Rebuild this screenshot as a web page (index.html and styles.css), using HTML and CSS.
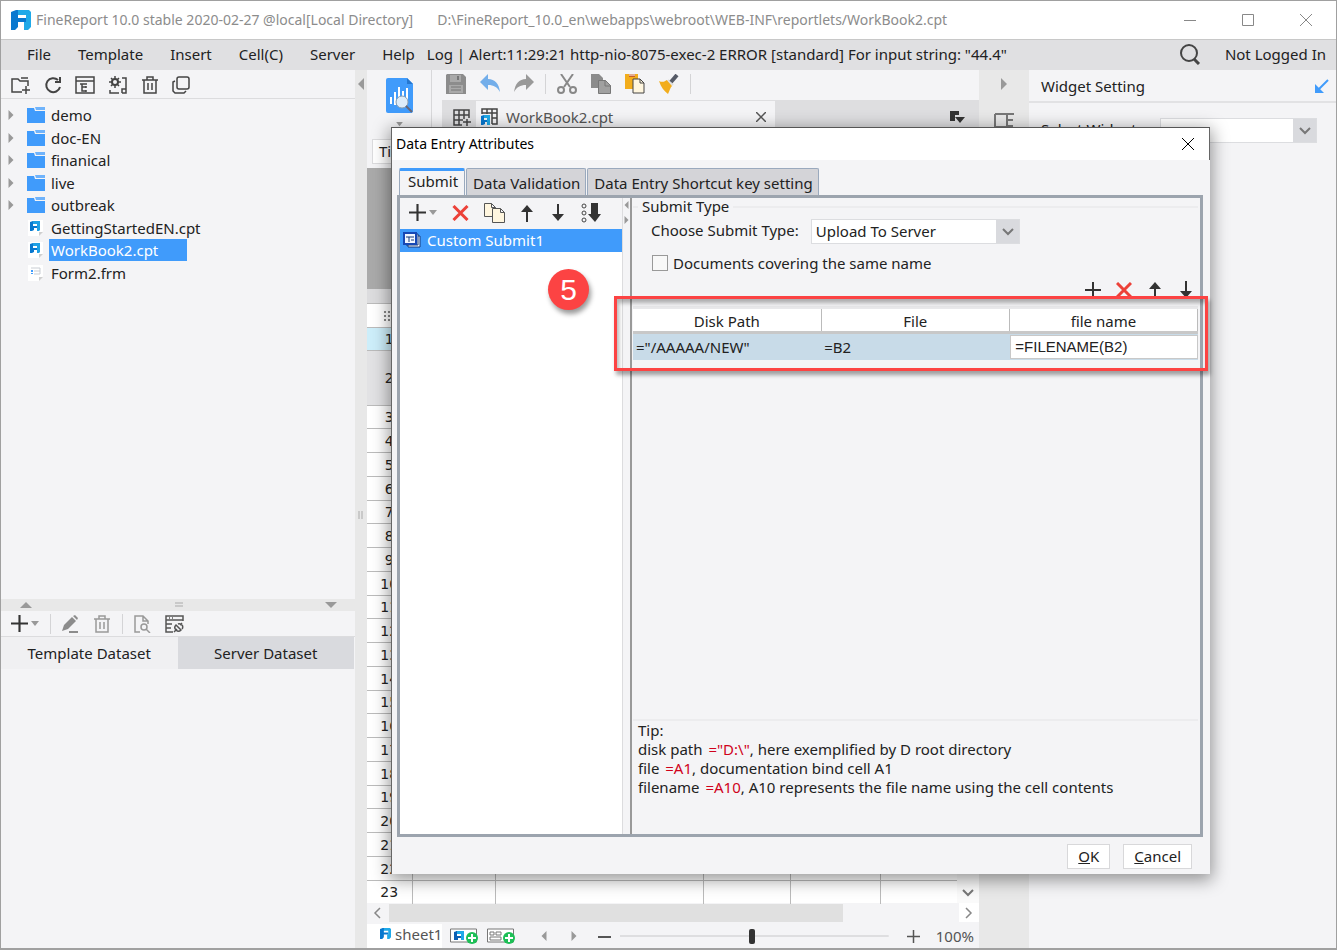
FILE: index.html
```
<!doctype html>
<html lang="en">

<head>
    <meta charset="utf-8" />
    <title>FineReport 10.0</title>
    <link rel="icon" href="data:,">
    <meta name="viewport" content="width=device-width, initial-scale=1">
    <link rel="stylesheet" href="styles.css">
</head>

<body>
    <svg class="sprite" aria-hidden="true">
        <symbol id="logo" viewBox="0 0 20 20">
            <path d="M5 0h13l2 2v15l-3 3h-4v-8h2V5H5z" fill="#1fa9e8" />
            <path d="M0 2l5-2h2v8h8v4H7v5l-3 3H0z" fill="#0878cf" />
        </symbol>
        <symbol id="folder" viewBox="0 0 18 16">
            <path d="M0 1h7l1 3h10v12H0z" fill="#409bfb" />
            <path d="M8 0h10v3H9z" fill="#6fb3fb" />
        </symbol>
        <symbol id="cpt" viewBox="0 0 16 16">
            <path d="M0 0h15v11l-4 5H0z" fill="#fff" />
            <path d="M11 16v-4h4z" fill="#cfcfcf" />
            <path d="M5 1h7v9l-1 1H9V4H5z" fill="#1fa0e4" />
            <path d="M2 2l3-1v5h4v2H6v2l-2 1H2z" fill="#0878cf" />
        </symbol>
        <symbol id="frm" viewBox="0 0 16 16">
            <path d="M0 0h15v11l-4 5H0z" fill="#fff" />
            <path d="M11 16v-4h4z" fill="#cfcfcf" />
            <path d="M3 3h9M6 6h6M6 9h6M12 3v6" stroke="#c9cdd3" fill="none" />
            <path d="M3 5h2v2H3zM3 8h2v1H3z" fill="#409bfb" />
        </symbol>
        <symbol id="plus" viewBox="0 0 16 16">
            <path d="M8 0v16M0 8h16" stroke="#333" stroke-width="2" />
        </symbol>
        <symbol id="cross" viewBox="0 0 16 16">
            <path d="M1 1l14 14M15 1L1 15" stroke="#ec4138" stroke-width="3" />
        </symbol>
        <symbol id="up" viewBox="0 0 16 18">
            <path d="M8 18V6" stroke="#333" stroke-width="2" />
            <path d="M2 8l6-7 6 7z" fill="#333" />
        </symbol>
        <symbol id="down" viewBox="0 0 16 18">
            <path d="M8 0v12" stroke="#333" stroke-width="2" />
            <path d="M2 10l6 7 6-7z" fill="#333" />
        </symbol>
        <symbol id="caret" viewBox="0 0 8 6">
            <path d="M0 0h8L4 5z" fill="#999" />
        </symbol>
        <symbol id="trash" viewBox="0 0 18 18">
            <path d="M1 4h16M6 4V1h6v3M3 4v13h12V4M7 7v7M11 7v7" fill="none" stroke="currentColor"
                stroke-width="1.5" />
        </symbol>
        <symbol id="chevron" viewBox="0 0 12 8">
            <path d="M1 1l5 5 5-5" fill="none" stroke="#777" stroke-width="2" />
        </symbol>
        <symbol id="left" viewBox="0 0 6 12">
            <path d="M6 0v12L0 6z" fill="#999" />
        </symbol>
        <symbol id="right" viewBox="0 0 6 12">
            <path d="M0 0v12l6-6z" fill="#999" />
        </symbol>
    </svg>

    <header class="titlebar">
        <svg class="logo"><use href="#logo" /></svg>
        <span class="title">FineReport 10.0 stable 2020-02-27 @local[Local Directory]</span>
        <span class="path">D:\FineReport_10.0_en\webapps\webroot\WEB-INF\reportlets/WorkBook2.cpt</span>
        <div class="winbuttons">
            <button aria-label="Minimize"><svg width="12" height="12"><path d="M0 6.500h12" /></svg></button>
            <button aria-label="Maximize"><svg width="12" height="12"><path d="M.5.5h11v11H.5z" /></svg></button>
            <button aria-label="Close"><svg width="12" height="12"><path d="M0 0l12 12M12 0L0 12" /></svg></button>
        </div>
    </header>

    <nav class="menubar">
        <button class="menu">File</button>
        <button class="menu">Template</button>
        <button class="menu">Insert</button>
        <button class="menu">Cell(C)</button>
        <button class="menu">Server</button>
        <button class="help">Help</button>
        <span class="log">Log | Alert:11:29:21 http-nio-8075-exec-2 ERROR [standard] For input string: "44.4"</span>
        <button class="search" aria-label="Search">
            <svg width="22" height="22" fill="none" stroke="#444">
                <circle cx="10" cy="10" r="8" stroke-width="2" />
                <path d="M15 16l5 5" stroke-width="3" />
            </svg>
        </button>
        <button>Not Logged In</button>
    </nav>

    <main class="workspace">
        <aside class="sidebar">
            <div class="files">
                <div class="toolbar">
                    <button aria-label="New folder"><svg width="20" height="18" fill="none" stroke="#444"
                            stroke-width="1.500"><path d="M11 16H1V3h6l2 2h8v5M10 2h7M15 10v8M11 14h8" /></svg></button>
                    <button aria-label="Refresh"><svg width="18" height="18" fill="none" stroke="#444"
                            stroke-width="2"><path d="M14 4a7 7 0 1 0 2 7M16 1v5h-5" /></svg></button>
                    <button aria-label="Locate"><svg width="20" height="18" fill="none" stroke="#444"
                            stroke-width="1.500"><path d="M1 1h18v16H1zM1 5h18M5 8h5M7 8v7h4M7 11h4" /><path
                                d="M10 8h2M10 11h2M10 15h2" /></svg></button>
                    <button aria-label="Settings"><svg width="20" height="18" fill="none" stroke="#444"
                            stroke-width="1.500"><circle cx="7" cy="6" r="3" stroke-width="2" /><path
                                d="M7 0v3M7 9v3M1 6h3M10 6h3M3 2l2 2M9 8l2 2M11 2L9 4M5 8l-2 2M14 2h4v15h-4M2 14v3h9M14 17v-4h4" /></svg></button>
                    <button aria-label="Delete"><svg width="18" height="18"><use href="#trash" /></svg></button>
                    <button aria-label="Copy"><svg width="18" height="18" fill="none" stroke="#444"
                            stroke-width="1.500"><rect x="5" y="1" width="12" height="12" rx="2" /><path
                                d="M3 5L1 6v9l2 2h9l2-2" /></svg></button>
                </div>
                <ul class="tree">
                    <li><svg class="twist"><use href="#right" /></svg><svg class="node"><use href="#folder" /></svg><span>demo</span></li>
                    <li><svg class="twist"><use href="#right" /></svg><svg class="node"><use href="#folder" /></svg><span>doc-EN</span></li>
                    <li><svg class="twist"><use href="#right" /></svg><svg class="node"><use href="#folder" /></svg><span>finanical</span></li>
                    <li><svg class="twist"><use href="#right" /></svg><svg class="node"><use href="#folder" /></svg><span>live</span></li>
                    <li><svg class="twist"><use href="#right" /></svg><svg class="node"><use href="#folder" /></svg><span>outbreak</span></li>
                    <li><svg class="twist"></svg><svg class="node"><use href="#cpt" /></svg><span>GettingStartedEN.cpt</span></li>
                    <li><svg class="twist"></svg><svg class="node"><use href="#cpt" /></svg><span class="current">WorkBook2.cpt</span></li>
                    <li><svg class="twist"></svg><svg class="node"><use href="#frm" /></svg><span>Form2.frm</span></li>
                </ul>
            </div>
            <div class="hsplit">
                <svg width="12" height="6"><path d="M0 6h12L6 0z" fill="#999" /></svg>
                <svg width="8" height="6"><path d="M0 1h8M0 4h8" stroke="#aaa" /></svg>
                <svg width="12" height="6"><path d="M0 0h12L6 6z" fill="#999" /></svg>
            </div>
            <div class="datasets">
                <div class="toolbar small">
                    <button class="add" aria-label="Add dataset"><svg width="17" height="17"><use href="#plus" /></svg><svg
                            width="8" height="6"><use href="#caret" /></svg></button>
                    <i class="sep"></i>
                    <button aria-label="Edit"><svg width="18" height="18" fill="#8c8c8c"><path
                                d="M1 16l2-6 8-8 4 4-8 8zM12 1l2-1 3 3-1 2zM8 16h9v2H8z" /></svg></button>
                    <button class="dim" aria-label="Delete dataset"><svg width="18" height="18"><use href="#trash" /></svg></button>
                    <i class="sep"></i>
                    <button aria-label="Preview dataset"><svg width="18" height="18" fill="none" stroke="#999"
                            stroke-width="1.500"><path d="M7 17H2V1h8l5 5v3M10 1v5h5" /><circle cx="11" cy="12" r="3" /><path
                                d="M13 14l4 4" /></svg></button>
                    <button aria-label="Connection"><svg width="19" height="18" fill="none" stroke="#555"
                            stroke-width="1.500"><path d="M8 17H1V1h17v5M1 5h17M1 9h6M1 13h5M4 3h1M7 3h1" /><path
                                d="M9 17l3-3M17 8l-2 2M11 10l5 5c-2 2-4 1-5 0s-2-3 0-5zM13 9c2-1 3 0 4 1s1 3 0 4" /></svg></button>
                </div>
                <div class="dstabs">
                    <button>Template Dataset</button>
                    <button class="other">Server Dataset</button>
                </div>
            </div>
        </aside>

        <div class="vsplit">
            <svg width="6" height="12"><use href="#left" /></svg>
            <svg class="grip" width="6" height="8"><path d="M1 0v8M4 0v8" stroke="#aaa" /></svg>
        </div>

        <section class="designer">
            <div class="top">
                <button class="preview" aria-label="Preview">
                    <svg width="27" height="36">
                        <path d="M2 0h19l6 6v27q0 2-2 2H2q-2 0-2-2V2q0-2 2-2z" fill="#409bfb" />
                        <path d="M21 0l6 6h-6z" fill="#2577cf" />
                        <path d="M5 26v-7M9 27V14M13 22V9M17 20v-7M21 26V10" stroke="#fff" stroke-width="2" />
                        <circle cx="16" cy="24" r="6" fill="#dcecfa" stroke="#8b9dad" />
                        <path d="M20 28l6 6" stroke="#667" stroke-width="2" />
                    </svg>
                    <svg width="7" height="5"><use href="#caret" /></svg>
                </button>
                <div class="topright">
                    <div class="toolbar edit">
                        <button aria-label="Save"><svg width="20" height="20"><path
                                    d="M1 0h16l3 3v17H0V1z" fill="#8c8c8c" /><path
                                    d="M4 1h11v7H4zM3 11h14v8H3z" fill="#a9a9a9" /><path d="M11 2h2v4h-2z" fill="#777" /><path
                                    d="M5 13h10M5 16h10" stroke="#777" /></svg></button>
                        <button aria-label="Undo"><svg width="20" height="20"><path
                                    d="M0 8l8-8v5c7 0 11 5 12 13-3-5-6-7-12-7v5z" fill="#73aeea" /></svg></button>
                        <button aria-label="Redo"><svg width="20" height="20"><path
                                    d="M20 8l-8-8v5C5 5 1 10 0 18c3-5 6-7 12-7v5z" fill="#999" /></svg></button>
                        <i class="sep"></i>
                        <button aria-label="Cut"><svg width="20" height="20" fill="none" stroke="#888"
                                stroke-width="2"><path d="M4 0l9 13M16 0L7 13" /><circle cx="4" cy="16" r="3" /><circle
                                    cx="16" cy="16" r="3" /></svg></button>
                        <button aria-label="Copy cells"><svg width="20" height="20"><path d="M0 0h8l4 4v10H0z"
                                    fill="#8c8c8c" /><path d="M7.500 6.500h7l5 5v8h-12z" fill="#a0a0a0" stroke="#777" /><path
                                    d="M14 6v6h6" fill="none" stroke="#777" /></svg></button>
                        <button aria-label="Paste"><svg width="20" height="20"><path d="M0 0h13v15H0z"
                                    fill="#f2ad1c" /><path d="M4 0h6v3H4z" fill="#c85d27" /><path d="M4 1h6" stroke="#fff" /><path
                                    d="M8 5h7l4 4v10H8z" fill="#fff6df" stroke="#444" /><path d="M15 5v4h4" fill="none"
                                    stroke="#444" /></svg></button>
                        <button aria-label="Format brush"><svg width="20" height="20"><path
                                    d="M0 7c4 2 6 0 8-1l5 6c-2 2-2 4-4 8C5 17 2 13 0 7z" fill="#f2ad1c" /><path
                                    d="M9 6l5 5" stroke="#ddd" stroke-width="2" /><path d="M12 8l6-7" stroke="#555a66"
                                    stroke-width="4" /></svg></button>
                        <i class="sep"></i>
                    </div>
                    <div class="booktabs">
                        <button class="newbook" aria-label="New workbook"><svg width="18" height="17" fill="none"
                                stroke="#444" stroke-width="1.500"><path
                                    d="M9 16H1V1h15v8M1 6h15M1 11h9M6 1v15M11 1v9M14 10v7M10 13h8" /></svg></button>
                        <div class="book">
                            <svg width="17" height="17" fill="none" stroke="#444" stroke-width="1.500"><path
                                    d="M1 6V1h15v15h-5M1 5h15M6 1v5M11 1v15M11 10h5" /><path
                                    d="M3 7h6v10H6v-7H3z" fill="#1fa9e8" stroke="none" /><path
                                    d="M0 8l3-1v5h3v2H4v2l-2 1H0z" fill="#0878cf" stroke="none" /></svg>
                            <span>WorkBook2.cpt</span>
                            <button aria-label="Close tab"><svg width="10" height="10"><path d="M0 0l10 10M10 0L0 10"
                                        stroke="#555" stroke-width="1.500" /></svg></button>
                        </div>
                        <svg class="booklist" width="16" height="14"><path d="M0 0h9v4H5v6H0zM5 6h10l-5 6z"
                                fill="#333" /></svg>
                    </div>
                </div>
            </div>
            <div class="paramrow"><span class="cellbox">Ti</span></div>
            <div class="param"></div>
            <div class="gap"></div>
            <div class="sheetarea">
                <table class="sheet">
                    <colgroup>
                        <col class="c-num"><col class="c-a"><col class="c-b"><col class="c-c"><col class="c-d"><col>
                    </colgroup>
                    <tr class="head"><th><svg width="12" height="12"><path d="M1 2h11M1 6h11M1 10h11" stroke="#888"
                                    stroke-width="2" stroke-dasharray="2" /></svg></th><td></td><td></td><td></td><td></td><td></td></tr>
                    <tr class="first"><th>1</th><td></td><td></td><td></td><td></td><td></td></tr>
                    <tr class="second"><th>2</th><td></td><td></td><td></td><td></td><td></td></tr>
                    <tr><th>3</th><td></td><td></td><td></td><td></td><td></td></tr>
                    <tr><th>4</th><td></td><td></td><td></td><td></td><td></td></tr>
                    <tr><th>5</th><td></td><td></td><td></td><td></td><td></td></tr>
                    <tr><th>6</th><td></td><td></td><td></td><td></td><td></td></tr>
                    <tr><th>7</th><td></td><td></td><td></td><td></td><td></td></tr>
                    <tr><th>8</th><td></td><td></td><td></td><td></td><td></td></tr>
                    <tr><th>9</th><td></td><td></td><td></td><td></td><td></td></tr>
                    <tr><th>10</th><td></td><td></td><td></td><td></td><td></td></tr>
                    <tr><th>11</th><td></td><td></td><td></td><td></td><td></td></tr>
                    <tr><th>12</th><td></td><td></td><td></td><td></td><td></td></tr>
                    <tr><th>13</th><td></td><td></td><td></td><td></td><td></td></tr>
                    <tr><th>14</th><td></td><td></td><td></td><td></td><td></td></tr>
                    <tr><th>15</th><td></td><td></td><td></td><td></td><td></td></tr>
                    <tr><th>16</th><td></td><td></td><td></td><td></td><td></td></tr>
                    <tr><th>17</th><td></td><td></td><td></td><td></td><td></td></tr>
                    <tr><th>18</th><td></td><td></td><td></td><td></td><td></td></tr>
                    <tr><th>19</th><td></td><td></td><td></td><td></td><td></td></tr>
                    <tr><th>20</th><td></td><td></td><td></td><td></td><td></td></tr>
                    <tr><th>21</th><td></td><td></td><td></td><td></td><td></td></tr>
                    <tr><th>22</th><td></td><td></td><td></td><td></td><td></td></tr>
                    <tr><th>23</th><td></td><td></td><td></td><td></td><td></td></tr>
                </table>
                <div class="vscroll"><svg width="12" height="8"><use href="#chevron" /></svg></div>
            </div>
            <div class="hscroll">
                <svg width="22" height="12"><path d="M13 1L8 6l5 5" fill="none" stroke="#888" stroke-width="1.500" /></svg>
                <i class="thumb"></i>
                <svg class="end" width="20" height="19"><path d="M7 5l5 5-5 5" fill="none" stroke="#888"
                        stroke-width="1.500" /></svg>
            </div>
            <div class="status">
                <div class="sheettab"><svg width="11" height="11"><use href="#logo" /></svg>sheet1</div>
                <button aria-label="Add sheet"><svg width="29" height="17"><path d="M.5 1h26v13H.5z" fill="#fff"
                            stroke="#777" /><path d="M6 3h8v9h-3V6H6z" fill="#1fa9e8" /><path
                            d="M4 4l3-1v5h4v2H8v2H4z" fill="#0b60b4" /><circle cx="22"
                            cy="10" r="6" fill="#1dbf56" /><path d="M22 6v8M18 10h8" stroke="#fff"
                            stroke-width="2" /></svg></button>
                <button aria-label="Add form"><svg width="29" height="17"><path d="M.5 1h26v13H.5z" fill="#fff"
                            stroke="#777" /><path d="M3 4h4v3H3zM9 4h5v3H9zM3 9h11v3H3z" fill="none"
                            stroke="#777" /><circle cx="22" cy="10" r="6" fill="#1dbf56" /><path
                            d="M22 6v8M18 10h8" stroke="#fff" stroke-width="2" /></svg></button>
                <button class="prev" aria-label="Previous sheet"><svg width="6" height="10"><use href="#left" /></svg></button>
                <button class="next" aria-label="Next sheet"><svg width="6" height="10"><use href="#right" /></svg></button>
                <button aria-label="Zoom out"><svg width="13" height="13"><path d="M0 7h13" stroke="#555"
                            stroke-width="2" /></svg></button>
                <input class="zoom" type="range" min="0" max="100" value="49" aria-label="Zoom">
                <button aria-label="Zoom in"><svg width="13" height="13"><path d="M0 6.500h13M6.500 0v13" stroke="#555"
                            stroke-width="1.500" /></svg></button>
                <span class="percent">100%</span>
            </div>
        </section>

        <div class="strip">
            <svg width="6" height="12"><use href="#right" /></svg>
            <svg width="20" height="20" fill="none" stroke="#777" stroke-width="2"><path
                    d="M1 1h19M1 1v13h12V1M13 7h6M13 13h6" /></svg>
        </div>

        <aside class="widgets">
            <h2>Widget Setting
                <svg width="14" height="14"><path d="M13 1L4 10" stroke="#409bfb" stroke-width="2" /><path
                        d="M0 5v9h9z" fill="#409bfb" /></svg>
            </h2>
            <div class="widgetrow">
                <label for="widget">Select Widget</label>
                <span class="select">
                    <select id="widget"><option></option></select>
                    <svg width="12" height="8"><use href="#chevron" /></svg>
                </span>
            </div>
        </aside>
    </main>

    <div class="dialog" role="dialog" aria-labelledby="dialogtitle">
        <div class="dialoghead">
            <span id="dialogtitle">Data Entry Attributes</span>
            <button aria-label="Close dialog"><svg width="12" height="12"><path d="M0 0l12 12M12 0L0 12"
                        stroke="#000" /></svg></button>
        </div>
        <div class="tabs">
            <button class="active">Submit</button>
            <button>Data Validation</button>
            <button>Data Entry Shortcut key setting</button>
        </div>
        <div class="panel">
            <div class="submits">
                <div class="toolbar">
                    <button class="add" aria-label="Add submit"><svg width="17" height="17"><use href="#plus" /></svg><svg
                            width="8" height="6"><use href="#caret" /></svg></button>
                    <button aria-label="Remove submit"><svg width="17" height="16"><use href="#cross" /></svg></button>
                    <button aria-label="Copy submit"><svg width="21" height="20" fill="#fff6df" stroke="#555"><path
                                d="M.5.5h7l4 4v9H.500zM7.500.5v4h4" /><path d="M8.500 5.500h8l4 4v10h-12zM16.500 5.500v4h4" /></svg></button>
                    <button aria-label="Move up"><svg width="16" height="18"><use href="#up" /></svg></button>
                    <button aria-label="Move down"><svg width="16" height="18"><use href="#down" /></svg></button>
                    <button aria-label="Sort"><svg width="20" height="20"><path d="M10 0h7v11h3l-6 8-7-8h3z"
                                fill="#333" /><g fill="none" stroke="#444"><circle cx="3" cy="3" r="2" /><circle
                                    cx="3" cy="10" r="2" /><circle cx="3" cy="17" r="2" /></g></svg></button>
                </div>
                <div class="submit">
                    <svg width="18" height="16"><path d="M5 4h12v11H5z" fill="#fff" stroke="#173a7a" /><path
                            d="M3 2h12v11H3z" fill="#dbe8fb" stroke="#173a7a" /><path d="M1 1h12v11H1z" fill="#f3f7ff"
                            stroke="#1748b4" stroke-width="2" /><path d="M3 5h8M6 5v5M8 8h3" stroke="#173a7a" /></svg>
                    Custom Submit1
                </div>
            </div>
            <div class="panesplit">
                <svg width="5" height="8"><use href="#left" /></svg>
                <svg width="5" height="8"><use href="#right" /></svg>
            </div>
            <div class="config">
                <fieldset>
                    <legend>Submit Type</legend>
                    <div class="choose">
                        <label for="type">Choose Submit Type:</label>
                        <span class="select">
                            <select id="type"><option>Upload To Server</option></select>
                            <svg width="12" height="8"><use href="#chevron" /></svg>
                        </span>
                    </div>
                    <label class="check"><input type="checkbox">Documents covering the same name</label>
                    <div class="rowtools">
                        <button aria-label="Add row"><svg width="16" height="16"><use href="#plus" /></svg></button>
                        <button aria-label="Remove row"><svg width="16" height="16"><use href="#cross" /></svg></button>
                        <button aria-label="Row up"><svg width="16" height="18"><use href="#up" /></svg></button>
                        <button aria-label="Row down"><svg width="16" height="18"><use href="#down" /></svg></button>
                    </div>
                    <table class="paths">
                        <tr><th>Disk Path</th><th>File</th><th>file name</th></tr>
                        <tr><td>="/AAAAA/NEW"</td><td>=B2</td><td><input value="=FILENAME(B2)" aria-label="file name"></td></tr>
                    </table>
                </fieldset>
                <div class="tip">
                    Tip:<br>
                    disk path <em>="D:\"</em>, here exemplified by D root directory<br>
                    file <em>=A1</em>, documentation bind cell A1<br>
                    filename <em>=A10</em>, A10 represents the file name using the cell contents
                </div>
            </div>
        </div>
        <div class="actions">
            <button><u>O</u>K</button>
            <button><u>C</u>ancel</button>
        </div>
        <div class="marker"></div>
        <div class="step">5</div>
    </div>
</body>

</html>
```
FILE: styles.css
```
* {
    box-sizing: border-box;
}

body {
    margin: 0;
    height: 100vh;
    min-height: 700px;
    display: flex;
    flex-direction: column;
    position: relative;
    overflow: hidden;
    border: 1px solid #a0a0a0;
    border-bottom-width: 2px;
    background: #f4f4f6;
    color: #222;
    font-family: "Noto Sans", "Open Sans", sans-serif;
    font-size: 15px;
    line-height: 20px;
}

button {
    padding: 0;
    border: 0;
    background: none;
    color: inherit;
    font: inherit;
    white-space: nowrap;
}

input,
select {
    font: inherit;
    color: inherit;
}

svg {
    display: block;
    flex: none;
}

.sprite {
    position: absolute;
    width: 0;
    height: 0;
}

/* window frame */

.titlebar {
    height: 38px;
    flex: none;
    display: flex;
    align-items: center;
    padding: 0 24px 0 10px;
    background: #fff;
    color: #8c8c8c;
    font-size: 14px;
    white-space: nowrap;
}

.logo {
    width: 20px;
    height: 20px;
    margin-right: 5px;
}

.title {
    margin-right: 24px;
}

.winbuttons {
    display: flex;
    gap: 46px;
    margin-left: auto;
}

.winbuttons svg {
    fill: none;
    stroke: #888;
}

.menubar {
    height: 31px;
    flex: none;
    display: flex;
    align-items: center;
    padding: 0 10px 2px 26px;
    border-top: 1px solid #c8c8c8;
    background: #e0e0e2;
    white-space: nowrap;
}

.menu {
    margin-right: 27px;
}

.help {
    margin-right: 12px;
}

.search {
    margin: 0 24px 0 auto;
}

.workspace {
    flex: 1;
    min-height: 0;
    display: flex;
}

.toolbar {
    display: flex;
    align-items: center;
    color: #444;
}

.sep {
    width: 1px;
    height: 20px;
    background: #d4d4d6;
}

/* left side */

.sidebar {
    width: 354px;
    flex: none;
    display: flex;
    flex-direction: column;
}

.files {
    flex: 1;
}

.files .toolbar {
    height: 29px;
    gap: 13px;
    padding: 2px 0 0 10px;
    border-bottom: 1px solid #dcdcde;
}

.tree {
    height: 180px;
    margin: 5px 0 0;
    padding: 0 0 0 7px;
    display: grid;
    grid-auto-rows: 1fr;
    list-style: none;
}

.tree li {
    display: flex;
    align-items: center;
}

.twist {
    width: 6px;
    height: 10px;
    margin-right: 13px;
}

.node {
    width: 18px;
    height: 16px;
    margin-right: 4px;
}

.tree span {
    padding: 0 2px;
    line-height: 22px;
}

.tree .current {
    width: 138px;
    background: #409bfb;
    color: #fff;
}

.hsplit {
    height: 12px;
    display: flex;
    align-items: center;
    justify-content: space-between;
    padding: 0 18px 0 19px;
    background: #e8e8e8;
}

.datasets {
    height: 337px;
}

.small {
    height: 26px;
    gap: 14px;
    padding-left: 10px;
    border-bottom: 1px solid #dcdcde;
}

.small .sep {
    margin: 0 -4px 0 -3px;
}

.add {
    display: flex;
    align-items: center;
    gap: 3px;
}

.dim {
    color: #999;
}

.dstabs {
    display: flex;
    padding-right: 1px;
}

.dstabs button {
    flex: 1;
    height: 32px;
    background: #f0f0f2;
}

.dstabs .other {
    background: #d9dade;
}

.vsplit {
    width: 12px;
    flex: none;
    display: flex;
    flex-direction: column;
    align-items: center;
    padding-top: 8px;
    background: #e8e8e8;
}

.grip {
    margin-top: 421px;
}

/* report designer */

.designer {
    flex: 1;
    min-width: 0;
    display: flex;
    flex-direction: column;
}

.top {
    display: flex;
    height: 66px;
    flex: none;
}

.preview {
    width: 65px;
    height: 58px;
    display: flex;
    flex-direction: column;
    align-items: center;
    gap: 8px;
    padding-top: 8px;
    border-right: 1px solid #d8d8da;
}

.topright {
    flex: 1;
    padding-left: 10px;
}

.edit {
    height: 30px;
    gap: 14px;
    padding: 0 0 2px 4px;
}

.edit .sep {
    margin: 0 -3px;
}

.booktabs {
    display: flex;
    align-items: center;
    height: 36px;
    background: #dedee0;
}

.newbook {
    width: 34px;
    padding: 0 0 2px 11px;
}

.book {
    width: 299px;
    height: 35px;
    display: flex;
    align-items: center;
    gap: 8px;
    padding: 0 9px 3px 5px;
    background: #f4f4f6;
    color: #555;
}

.book button {
    margin-left: auto;
}

.booklist {
    margin: 0 13px 0 auto;
}

.paramrow {
    height: 32px;
    padding: 3px 5px;
}

.cellbox {
    display: block;
    height: 25px;
    padding: 1px 6px;
    border: 1px solid #dcdcde;
    background: #fff;
}

.param {
    height: 121px;
    background: #aaa;
}

.gap {
    height: 14px;
    background: #dcdcde;
}

.sheetarea {
    flex: 1;
    min-height: 0;
    display: flex;
    background: #fff;
}

.sheet {
    flex: 1;
    height: max-content;
    table-layout: fixed;
    border-collapse: collapse;
    font-family: "DejaVu Sans", sans-serif;
    font-size: 14px;
}

.sheet tr {
    height: 24px;
}

.sheet tr:nth-child(4n) {
    height: 23px;
}

.sheet th,
.sheet td {
    padding: 0;
    border: 1px solid #bbb;
    border-width: 1px 1px 0 0;
    font-weight: normal;
}

.sheet td:last-child {
    border-right: 0;
}

.sheet th svg {
    margin: 0 auto;
}

.sheet .first {
    height: 23px;
}

.sheet .first th {
    background: #cdeefa;
}

.sheet .second {
    height: 55px;
}

.sheet .second th {
    background: #e2e2e4;
}

.c-num {
    width: 45px;
}

.c-a {
    width: 83px;
}

.c-b {
    width: 208px;
}

.c-c {
    width: 87px;
}

.c-d {
    width: 90px;
}

.vscroll {
    width: 22px;
    display: flex;
    align-items: flex-end;
    justify-content: center;
    padding-bottom: 6px;
    background: #fafafa;
}

.hscroll {
    height: 19px;
    flex: none;
    display: flex;
    align-items: center;
}

.thumb {
    width: 454px;
    height: 18px;
    background: #e0e0e0;
}

.end {
    margin-left: auto;
    background: #fff;
}

.status {
    height: 26px;
    flex: none;
    display: flex;
    align-items: center;
    gap: 8px;
    padding: 2px 5px 0 0;
    color: #555;
}

.sheettab {
    display: flex;
    align-items: center;
    gap: 4px;
    padding: 0 0 5px 13px;
    background: #fff;
}

.prev {
    margin-left: 17px;
}

.next {
    margin: 0 13px 0 16px;
}

.zoom {
    flex: 1;
    min-width: 0;
    height: 16px;
    margin: 0 10px 0 1px;
    appearance: none;
    background: linear-gradient(#dedee0, #dedee0) center / 100% 2px no-repeat;
}

.zoom::-webkit-slider-thumb {
    appearance: none;
    width: 6px;
    height: 15px;
    border-radius: 2px;
    background: #333;
}

.percent {
    margin-left: 8px;
}

.strip {
    width: 50px;
    flex: none;
    display: flex;
    flex-direction: column;
    align-items: center;
    gap: 23px;
    padding-top: 8px;
    background: #e8e8e8;
}

/* widget panel */

.widgets {
    width: 307px;
    flex: none;
}

.widgets h2 {
    height: 33px;
    display: flex;
    align-items: center;
    justify-content: space-between;
    margin: 0;
    padding: 0 7px 0 12px;
    border-bottom: 2px solid #e2e2e4;
    font-size: 15px;
    font-weight: normal;
}

.widgetrow {
    display: flex;
    align-items: center;
    justify-content: space-between;
    padding: 15px 19px 0 12px;
}

.widgetrow label {
    padding-bottom: 3px;
}

.widgetrow .select {
    width: 157px;
}

.select {
    display: grid;
    grid-template-columns: 1fr 24px;
    align-items: center;
    justify-items: center;
}

.select select {
    grid-area: 1 / 1 / 2 / 3;
    width: 100%;
    height: 25px;
    padding: 0 4px 2px;
    appearance: none;
    border: 1px solid #dcdde0;
    border-radius: 0;
    background: linear-gradient(#d9dade, #d9dade) right / 24px 100% no-repeat border-box #fff;
}

.select svg {
    grid-area: 1 / 2;
    pointer-events: none;
    z-index: 1;
}

/* data entry dialog, floats over the designer */

.dialog {
    position: absolute;
    inset: 126px 126px 74px 390px;
    display: flex;
    flex-direction: column;
    border-top: 1px solid #555;
    border-left: 1px solid #666;
    background: #f4f4f6;
    box-shadow: 0 4px 16px 2px rgba(0, 0, 0, .4);
}

.dialoghead {
    height: 32px;
    flex: none;
    display: flex;
    align-items: center;
    justify-content: space-between;
    padding: 0 15px 0 4px;
    border-right: 1px solid #666;
    background: #fff;
    color: #000;
    font-size: 14px;
}

.tabs {
    display: flex;
    gap: 1px;
    padding: 8px 7px 0;
}

.tabs button {
    height: 27px;
    padding: 1px 5px 0 6px;
    border: 1px solid #9aa9bd;
    border-bottom: 0;
    border-radius: 2px 2px 0 0;
    background: #d4d4d8;
}

.tabs .active {
    padding: 0 6px 4px 8px;
    border-top: 3px solid #409bfb;
    background: #f4f4f6;
}

.panel {
    flex: 1;
    min-height: 0;
    display: flex;
    margin: 0 7px 0 5px;
    border: 3px solid #9ca4ae;
}

.submits {
    width: 223px;
    flex: none;
    background: #fff;
    border-right: 1px solid #dcdcde;
}

.submits .toolbar {
    height: 31px;
    justify-content: space-between;
    padding: 0 21px 2px 9px;
    background: #f4f4f6;
}

.submit {
    display: flex;
    align-items: center;
    gap: 6px;
    height: 23px;
    padding: 0 0 1px 3px;
    background: #409bfb;
    color: #fff;
}

.panesplit {
    width: 9px;
    flex: none;
    display: flex;
    flex-direction: column;
    align-items: center;
    gap: 7px;
    padding-top: 3px;
    border-right: 2px solid #999;
}

.config {
    flex: 1;
    min-width: 0;
    display: flex;
    flex-direction: column;
    padding: 0 2px 0 1px;
}

.config fieldset {
    flex: 1;
    min-width: 0;
    margin: 0;
    padding: 0;
    border: 0;
    border-top: 2px solid #ececee;
    border-bottom: 2px solid #ececee;
}

.config legend {
    margin-left: 5px;
    padding: 0 4px;
    line-height: 17px;
}

.choose {
    display: flex;
    align-items: center;
    gap: 12px;
    padding: 4px 0 0 18px;
}

.choose label {
    padding-bottom: 3px;
}

.choose .select {
    width: 209px;
}

.check {
    display: flex;
    align-items: center;
    gap: 5px;
    padding: 9px 0 0 19px;
}

.check input {
    width: 16px;
    height: 16px;
    margin: 0;
    appearance: none;
    border: 1px solid #999;
    background: #f8f8f8;
}

.rowtools {
    display: flex;
    align-items: center;
    justify-content: flex-end;
    gap: 15px;
    height: 33px;
    padding: 0 4px 0 0;
}

.paths {
    width: 100%;
    table-layout: fixed;
    border-collapse: collapse;
    border-top: 3px solid #e8e8ea;
}

.paths th {
    height: 24px;
    padding: 2px 0 0;
    border-right: 1px solid #bbb;
    background: #fff;
    font-weight: normal;
}

.paths td {
    height: 27px;
    padding: 0 3px;
    border-top: 3px solid #c8c8c8;
    background: #c8dbe8;
}

.paths td:last-child {
    padding: 0 0 0 1px;
}

.paths input {
    display: block;
    width: 100%;
    height: 24px;
    padding: 0 4px;
    border: 1px solid #c8c8c8;
    background: #fff;
    font-family: "Liberation Sans", Arial, sans-serif;
}

.tip {
    height: 113px;
    padding: 0 5px;
    line-height: 19px;
}

.tip em {
    margin-left: 2px;
    color: #d0021b;
    font-style: normal;
}

.actions {
    flex: none;
    display: flex;
    justify-content: flex-end;
    gap: 13px;
    padding: 7px 18px 5px;
}

.actions button {
    height: 25px;
    padding: 0 10px 1px;
    border: 1px solid #d8d8da;
    background: #fff;
}

/* callout on top of the dialog */

.marker {
    position: absolute;
    top: 168px;
    right: 2px;
    left: 222px;
    height: 75px;
    border: 3px solid #fc4343;
    box-shadow: 2px 4px 4px rgba(0, 0, 0, .35), inset 2px 4px 4px rgba(0, 0, 0, .3);
}

.step {
    position: absolute;
    top: 141px;
    left: 156px;
    width: 41px;
    height: 41px;
    border-radius: 50%;
    background: #fc4343;
    box-shadow: 2px 4px 5px rgba(0, 0, 0, .4);
    color: #fff;
    font: 30px/41px "Liberation Sans", Arial, sans-serif;
    text-align: center;
}
```
